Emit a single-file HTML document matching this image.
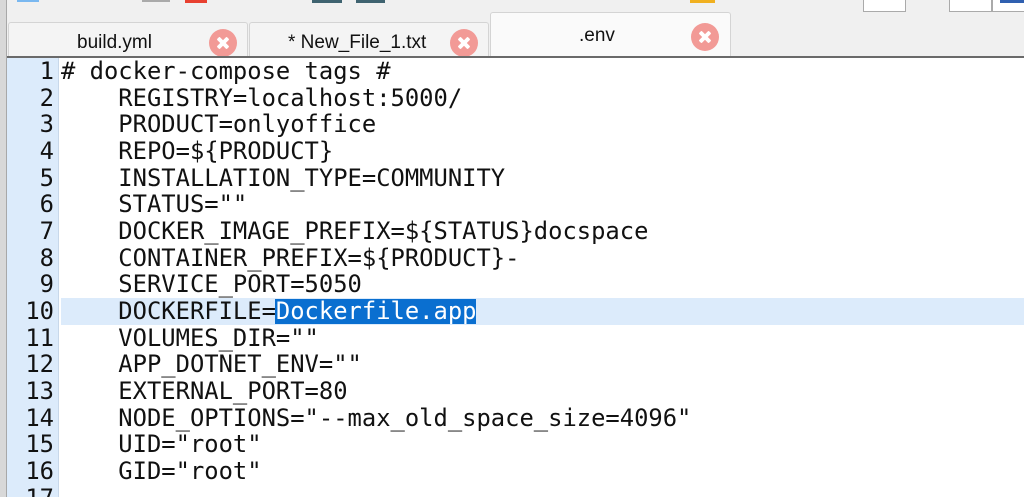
<!DOCTYPE html>
<html style="overflow:hidden"><head><meta charset="utf-8"><style>
html,body{margin:0;width:1024px;height:497px;overflow:hidden}
body{background:#f0f0f0;font-family:"Liberation Sans",sans-serif;position:relative}
.tab{position:absolute;background:#f4f4f4;border:1px solid #d4d4d4;border-bottom:none;border-radius:3px 3px 0 0;box-sizing:border-box;overflow:hidden}
.tab span{position:absolute;font-size:19px;color:#111;top:62%;transform:translateY(-50%)}
.x{position:absolute;width:28px;height:28px;border-radius:50%;background:#f29a96}
.x:before,.x:after{content:"";position:absolute;left:7px;top:12px;width:14px;height:4px;background:#fff;border-radius:1px;transform:rotate(45deg)}
.x:after{transform:rotate(-45deg)}
#ed{position:absolute;left:7px;top:56px;right:0;bottom:0;background:#fff;border-top:2px solid #6a6a6a;overflow:hidden}
#gut{position:absolute;left:0;top:0;width:51px;bottom:0;background:#dcebfb;border-right:1px solid #c8d8ea}
.ln{position:absolute;left:0;width:47px;text-align:right;font-family:"DejaVu Sans Mono","Liberation Mono",monospace;font-size:23.8px;color:#111}
.cl{position:absolute;left:54px;white-space:pre;font-family:"DejaVu Sans Mono","Liberation Mono",monospace;font-size:23.8px;color:#111}
</style></head><body>
<div style="position:absolute;left:0;top:0;width:6px;height:497px;background:#d8d8d8;border-right:1px solid #a8a8a8"></div>
<div style="position:absolute;left:17px;top:0;width:22px;height:2px;background:#7ab8f0"></div>
<div style="position:absolute;left:142px;top:0;width:28px;height:2px;background:#aaa"></div>
<div style="position:absolute;left:185px;top:0;width:22px;height:3px;background:#e84030"></div>
<div style="position:absolute;left:312px;top:0;width:30px;height:3px;background:#3f6370"></div>
<div style="position:absolute;left:356px;top:0;width:29px;height:3px;background:#3f6370"></div>
<div style="position:absolute;left:690px;top:0;width:25px;height:3px;background:#f0b020"></div>
<div style="position:absolute;left:863px;top:-2px;width:41px;height:12px;background:#fff;border:1px solid #aaa"></div>
<div style="position:absolute;left:949px;top:-2px;width:41px;height:12px;background:#fff;border:1px solid #aaa"></div>
<div style="position:absolute;left:992px;top:-2px;width:40px;height:12px;background:#fff;border:1px solid #aaa"></div>
<div style="position:absolute;left:1000px;top:0;width:24px;height:3px;background:#3060b0"></div>

<div class="tab" style="left:8px;top:22px;width:240px;height:34px"><span style="left:68px">build.yml</span><div class="x" style="left:200px;top:6px"></div></div>
<div class="tab" style="left:249px;top:22px;width:240px;height:34px"><span style="left:38px">* New_File_1.txt</span><div class="x" style="left:200px;top:6px"></div></div>
<div class="tab" style="left:490px;top:12px;width:241px;height:44px;background:#fafafa"><span style="left:88px;top:54%">.env</span><div class="x" style="left:200px;top:10px"></div></div>

<div id="ed">
<div id="gut"></div>
<div style="position:absolute;left:54px;right:0;top:240px;height:27px;background:#dcebfb"></div>
<div style="position:absolute;left:268px;top:241px;width:201px;height:25px;background:#0a6fd0"></div>
<div id="lines"></div>
</div>
<script>
var L=["# docker-compose tags #","    REGISTRY=localhost:5000/","    PRODUCT=onlyoffice","    REPO=${PRODUCT}","    INSTALLATION_TYPE=COMMUNITY","    STATUS=\"\"","    DOCKER_IMAGE_PREFIX=${STATUS}docspace","    CONTAINER_PREFIX=${PRODUCT}-","    SERVICE_PORT=5050","    DOCKERFILE=<span style=\"color:#fff\">Dockerfile.app</span>","    VOLUMES_DIR=\"\"","    APP_DOTNET_ENV=\"\"","    EXTERNAL_PORT=80","    NODE_OPTIONS=\"--max_old_space_size=4096\"","    UID=\"root\"","    GID=\"root\"",""];
var h="";for(var i=0;i<17;i++){var t=i*26.67-1;h+='<div class="ln" style="top:'+t+'px">'+(i+1)+'</div><div class="cl" style="top:'+t+'px">'+L[i]+'</div>';}
document.getElementById("lines").innerHTML=h;
</script>
</body></html>
